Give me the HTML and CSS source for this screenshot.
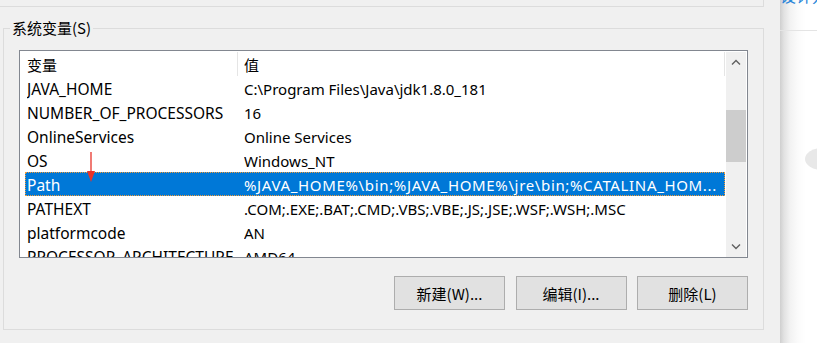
FILE: index.html
```html
<!DOCTYPE html>
<html lang="zh-CN">
<head>
<meta charset="utf-8">
<title>系统变量</title>
<link rel="stylesheet" href="styles.css">
</head>
<body>
<div class="screen">
  <div class="dialog">
    <div class="prev-group"></div>
    <div class="group">
      <span class="legend">系统变量(S)</span>
      <div class="list">
        <div class="list-main">
          <div class="header">
            <div class="hcell h1">变量</div>
            <div class="hcell h2">值</div>
          </div>
          <div class="rows">
            <div class="row"><div class="c1">JAVA_HOME</div><div class="c2">C:\Program Files\Java\jdk1.8.0_181</div></div>
            <div class="row"><div class="c1">NUMBER_OF_PROCESSORS</div><div class="c2">16</div></div>
            <div class="row"><div class="c1">OnlineServices</div><div class="c2">Online Services</div></div>
            <div class="row"><div class="c1">OS</div><div class="c2">Windows_NT</div></div>
            <div class="row selected"><div class="c1">Path</div><div class="c2 wide">%JAVA_HOME%\bin;%JAVA_HOME%\jre\bin;%CATALINA_HOM...</div></div>
            <div class="row"><div class="c1">PATHEXT</div><div class="c2">.COM;.EXE;.BAT;.CMD;.VBS;.VBE;.JS;.JSE;.WSF;.WSH;.MSC</div></div>
            <div class="row"><div class="c1">platformcode</div><div class="c2">AN</div></div>
            <div class="row"><div class="c1">PROCESSOR_ARCHITECTURE</div><div class="c2">AMD64</div></div>
          </div>
        </div>
        <div class="scrollbar">
          <div class="sb-btn">
            <svg width="10" height="6" viewBox="0 0 10 6"><path d="M1 5.5 L5 1.5 L9 5.5" fill="none" stroke="#606060" stroke-width="1.4"/></svg>
          </div>
          <div class="sb-track">
            <div class="sb-gap"></div>
            <div class="sb-thumb"></div>
          </div>
          <div class="sb-btn">
            <svg width="10" height="6" viewBox="0 0 10 6"><path d="M1 0.5 L5 4.5 L9 0.5" fill="none" stroke="#606060" stroke-width="1.4"/></svg>
          </div>
        </div>
      </div>
      <div class="buttons">
        <button class="btn">新建(W)...</button>
        <button class="btn">编辑(I)...</button>
        <button class="btn">删除(L)</button>
      </div>
    </div>
  </div>
  <div class="side">
    <div class="side-top"><span class="side-link">设计方案</span></div>
    <div class="side-blob"></div>
  </div>
  <svg class="arrow" width="12" height="34" viewBox="0 0 12 34">
    <line x1="6" y1="1" x2="6" y2="22" stroke="#e8332a" stroke-width="1.3"/>
    <path d="M2 20 L10 20 L6 31 Z" fill="#e8332a"/>
  </svg>
</div>
</body>
</html>
```

FILE: styles.css
```css
* { box-sizing: border-box; }
html, body { margin: 0; padding: 0; }
body {
  width: 817px;
  height: 343px;
  overflow: hidden;
  background: #f0f0f0;
  font-family: "Noto Sans", "Noto Sans CJK SC", sans-serif;
  font-size: 15px;
  color: #000;
}
.screen {
  position: relative;
  display: flex;
  width: 817px;
  height: 343px;
  overflow: hidden;
}
.dialog {
  flex: none;
  width: 780px;
  height: 343px;
  background: #f0f0f0;
}
.prev-group {
  width: 764px;
  height: 7px;
  border-right: 1px solid #dcdcdc;
  border-bottom: 1px solid #dcdcdc;
}
.group {
  position: relative;
  margin: 21px 0 0 3px;
  width: 761px;
  height: 302px;
  border: 1px solid #dcdcdc;
  padding: 21px 0 0 15px;
}
.legend {
  position: absolute;
  top: -11px;
  left: 6px;
  padding: 0 2px;
  line-height: 20px;
  background: #f0f0f0;
  font-family: "Noto Sans CJK SC", sans-serif;
}
.list {
  display: flex;
  width: 729px;
  height: 208px;
  border: 1px solid #828790;
  background: #fff;
}
.list-main {
  width: 706px;
  flex: none;
  overflow: hidden;
}
.header {
  display: flex;
  height: 25px;
  align-items: stretch;
}
.hcell {
  display: flex;
  align-items: center;
  margin: 1px 0 0;
  height: 24px;
  padding-top: 1px;
  font-family: "Noto Sans CJK SC", sans-serif;
}
.h1 {
  width: 218px;
  padding-left: 7px;
  border-right: 1px solid #e5e5e5;
}
.h2 {
  width: 487px;
  padding-left: 6px;
  border-right: 1px solid #e5e5e5;
}
.rows {
  margin-left: 5px;
  width: 700px;
}
.row {
  display: flex;
  height: 24px;
  align-items: center;
  padding-left: 2px;
  padding-top: 2px;
  white-space: nowrap;
}
.c1 { width: 217px; flex: none; overflow: hidden; font-size: 15.5px; }
.c2 { flex: 1; overflow: hidden; }
.c2.wide { letter-spacing: 0.65px; }
.row.selected {
  background: #0078d7;
  color: #fff;
  border: 1px dotted #f29c38;
  padding-left: 1px;
  padding-top: 1px;
}
.scrollbar {
  display: flex;
  flex-direction: column;
  width: 20px;
  margin: 1px 1px 0 0;
  background: #f0f0f0;
}
.sb-btn {
  height: 20px;
  display: flex;
  align-items: center;
  justify-content: center;
}
.sb-track { flex: 1; }
.sb-gap { height: 38px; }
.sb-thumb {
  height: 52px;
  background: #cdcdcd;
}
.buttons {
  display: flex;
  justify-content: flex-end;
  gap: 10.5px;
  margin-top: 18px;
  padding-right: 15px;
}
.btn {
  width: 111px;
  height: 34px;
  border: 1px solid #adadad;
  background: #e1e1e1;
  font-family: "Noto Sans CJK SC", sans-serif;
  font-size: 15px;
  color: #000;
  padding: 0;
}
.side {
  position: relative;
  flex: 1;
  height: 343px;
  overflow: hidden;
  background: linear-gradient(to right, #cfcfcf 0, #e2e2e2 4px, #f2f2f2 10px, #fbfbfb 18px, #ffffff 26px);
}
.side-top {
  height: 31px;
  border-bottom: 1px solid #e4e4e4;
  overflow: hidden;
}
.side-link {
  display: block;
  margin-top: -17px;
  color: #2a86d8;
  font-size: 16px;
  font-family: "Noto Sans CJK SC", sans-serif;
  white-space: nowrap;
}
.side-blob {
  position: absolute;
  left: 25px;
  top: 148px;
  width: 34px;
  height: 22px;
  border-radius: 50%;
  background: #e8e8e8;
}
.arrow {
  position: absolute;
  left: 85px;
  top: 151px;
}
```
